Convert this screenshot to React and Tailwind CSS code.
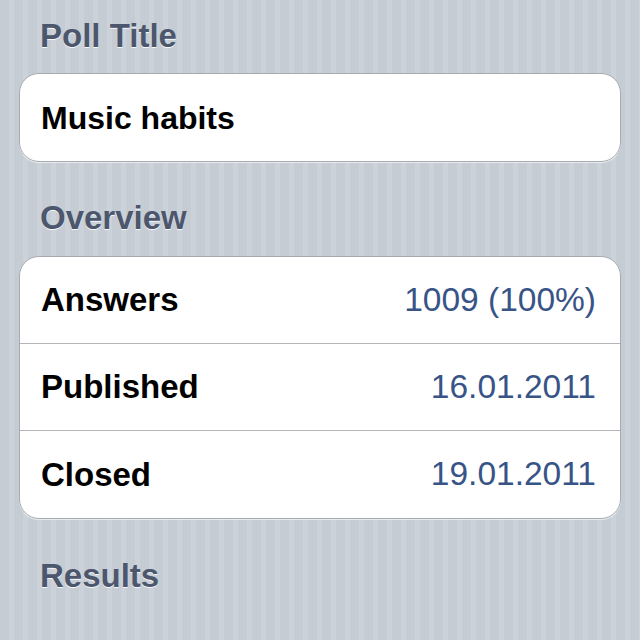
export default function App() {
  const overview = [
    { label: 'Answers', value: '1009 (100%)' },
    { label: 'Published', value: '16.01.2011' },
    { label: 'Closed', value: '19.01.2011' },
  ];

  const headerCls =
    "pl-[40px] h-[40px] leading-[40px] text-[33px] font-bold text-[#4c566c] [text-shadow:0_1px_0_rgba(255,255,255,0.85)]";

  return (
    <div className="w-[640px] h-[640px] overflow-hidden pt-[16px] font-['Liberation_Sans',Helvetica,Arial,sans-serif] bg-[repeating-linear-gradient(90deg,#c5ccd4_0px,#c5ccd4_9px,#cbd2d9_9px,#cbd2d9_14px)]">
      {/* Poll title */}
      <div className={headerCls}>Poll Title</div>
      <div className="mx-[19px] mt-[17px] rounded-[20px] border border-[#a7abb0] bg-white shadow-[0_1px_0_rgba(255,255,255,0.6)]">
        <div className="h-[87px] flex items-center px-[21px] text-[32px] font-bold text-black">
          Music habits
        </div>
      </div>

      {/* Overview */}
      <div className={headerCls + " mt-[36px]"}>Overview</div>
      <div className="mx-[19px] mt-[18px] rounded-[20px] border border-[#a7abb0] bg-white shadow-[0_1px_0_rgba(255,255,255,0.6)]">
        {overview.map((row, i) => (
          <div
            key={row.label}
            className={
              "h-[87px] flex items-center justify-between pl-[21px] pr-[24px] " +
              (i < overview.length - 1 ? "border-b border-[#b3b5b8]" : "")
            }
          >
            <span className="text-[33px] font-bold text-black">{row.label}</span>
            <span className="text-[33.5px] text-[#385487]">{row.value}</span>
          </div>
        ))}
      </div>

      {/* Results */}
      <div className={headerCls + " mt-[37px]"}>Results</div>
    </div>
  );
}
